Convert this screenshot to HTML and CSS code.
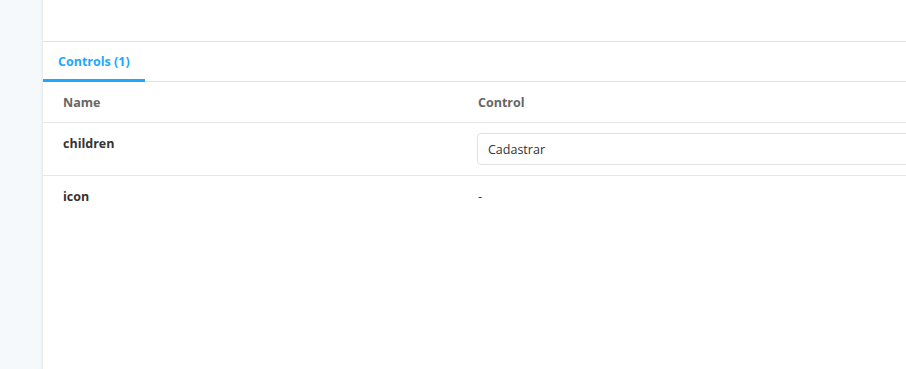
FILE: index.html
```html
<!DOCTYPE html>
<html>
<head>
<meta charset="utf-8">
<link rel="stylesheet" href="styles.css">
</head>
<body>
<div class="app">
  <aside class="sidebar"></aside>
  <main class="panel">
    <div class="preview"></div>
    <div class="tabs">
      <div class="tab active">Controls (1)</div>
    </div>
    <div class="table">
      <div class="row head">
        <div class="cell">Name</div>
        <div class="cell">Control</div>
      </div>
      <div class="row">
        <div class="cell name">children</div>
        <div class="cell"><div class="input">Cadastrar</div></div>
      </div>
      <div class="row">
        <div class="cell name">icon</div>
        <div class="cell dash">-</div>
      </div>
    </div>
  </main>
</div>
</body>
</html>
```
FILE: styles.css
```css
html, body {
  margin: 0;
  padding: 0;
  height: 100%;
  overflow: hidden;
  background: #fff;
  font-family: "Open Sans", "Noto Sans", sans-serif;
  font-size: 13px;
  color: #333;
}
.app {
  display: flex;
  height: 100%;
}
.sidebar {
  width: 43px;
  flex: none;
  background: #F6F9FC;
  box-shadow: inset -3px 0 3px -2px rgba(0,0,0,0.08);
}
.panel {
  flex: 1;
  min-width: 0;
  display: flex;
  flex-direction: column;
}
.preview {
  height: 41px;
  border-bottom: 1px solid #e2e2e2;
}
.tabs {
  height: 40px;
  display: flex;
  box-shadow: inset 0 -1px 0 #e2e2e2;
}
.tab {
  padding: 2px 15px 0;
  font-weight: 700;
  font-size: 12.5px;
  line-height: 35px;
  color: #1EA7FD;
  border-bottom: 3px solid #1EA7FD;
}
.table {
  display: flex;
  flex-direction: column;
}
.row {
  display: grid;
  grid-template-columns: 415px 460px;
  border-bottom: 1px solid #e6e6e6;
}
.cell {
  padding: 11px 20px 9px;
  line-height: 20px;
}
.head .cell {
  font-weight: 700;
  color: #666;
  font-size: 12.5px;
}
.name {
  font-weight: 700;
  font-size: 12.5px;
}
.row .cell:has(.input) {
  padding-top: 10px;
  padding-bottom: 10px;
}
.input {
  box-sizing: border-box;
  height: 32px;
  border: 1px solid #e2e2e2;
  border-radius: 4px;
  padding: 6px 10px 4px;
  font-size: 12.5px;
  margin-left: -1px;
  width: 460px;
}
.dash {
  font-size: 12.5px;
}
.row:last-child {
  border-bottom: none;
}
```
